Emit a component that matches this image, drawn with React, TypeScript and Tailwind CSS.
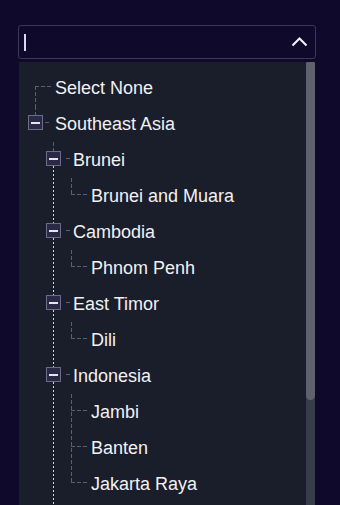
import React from "react";

type Line = "grey" | "white" | null;

interface RowData {
  label: string;
  guides: Line[];
  type: "leaf" | "box" | "spacer";
  up?: Line;
  down?: Line;
  leafUp?: boolean;
  leafDown?: boolean;
}

const rows: RowData[] = [
  { label: "Select None", guides: [], type: "leaf", leafUp: false, leafDown: true },
  { label: "Southeast Asia", guides: [], type: "box", up: "grey", down: null },
  { label: "Brunei", guides: [null], type: "box", up: "grey", down: "white" },
  { label: "Brunei and Muara", guides: [null, "white"], type: "leaf", leafUp: true, leafDown: false },
  { label: "Cambodia", guides: [null], type: "box", up: "white", down: "white" },
  { label: "Phnom Penh", guides: [null, "white"], type: "leaf", leafUp: true, leafDown: false },
  { label: "East Timor", guides: [null], type: "box", up: "white", down: "white" },
  { label: "Dili", guides: [null, "white"], type: "leaf", leafUp: true, leafDown: false },
  { label: "Indonesia", guides: [null], type: "box", up: "white", down: "white" },
  { label: "Jambi", guides: [null, "white"], type: "leaf", leafUp: true, leafDown: true },
  { label: "Banten", guides: [null, "white"], type: "leaf", leafUp: true, leafDown: true },
  { label: "Jakarta Raya", guides: [null, "white"], type: "leaf", leafUp: true, leafDown: false },
  // next country starts just below the fold; only its guide line shows
  { label: "", guides: [null, "white"], type: "spacer" },
];

const greyV = "bg-[image:repeating-linear-gradient(to_bottom,#5b5f70_0_4px,transparent_4px_6px)]";
const greyH = "bg-[image:repeating-linear-gradient(to_right,#5b5f70_0_4px,transparent_4px_6px)]";
const whiteV = "bg-[image:repeating-linear-gradient(to_bottom,#d6d6de_0_2px,transparent_2px_4px)]";

function vClass(line: Line) {
  return line === "white" ? whiteV : greyV;
}

function Guide({ line }: { line: Line }) {
  return (
    <div className="relative w-[18px] h-9 flex-none">
      {line && <div className={`absolute left-[9px] top-0 w-px h-9 ${vClass(line)}`} />}
    </div>
  );
}

function TreeRow({ row }: { row: RowData }) {
  const level = row.guides.length;
  if (row.type === "spacer") {
    return (
      <div className="flex h-9">
        {row.guides.slice(0, -1).map((g, i) => (
          <Guide key={i} line={g} />
        ))}
        <Guide line="white" />
      </div>
    );
  }
  return (
    <div className="flex h-9 items-stretch">
      {row.guides.map((g, i) => (
        <Guide key={i} line={g} />
      ))}
      <div className="relative w-[29px] h-9 flex-none">
        {row.type === "leaf" ? (
          <>
            <div
              className={`absolute left-[9px] w-px ${greyV} ${
                row.leafUp ? "top-0" : "top-[16px]"
              } ${row.leafDown ? "bottom-0" : row.leafUp ? "h-[17px]" : "h-0"}`}
            />
            <div className={`absolute left-[9px] top-[16px] w-[18px] h-px ${greyH}`} />
          </>
        ) : (
          <>
            {row.up && <div className={`absolute left-[9px] top-0 w-px h-[9px] ${vClass(row.up)}`} />}
            {row.down && (
              <div className={`absolute left-[9px] top-[24px] w-px h-[12px] ${vClass(row.down)}`} />
            )}
            <div className="absolute left-[2px] top-[9px] w-[15px] h-[15px] border border-[#6d6b8a] bg-[#2b2946] flex items-center justify-center">
              <div className="w-[9px] h-[2px] bg-[#e4e4ec]" />
            </div>
            <div
              className={`absolute top-[16px] h-px w-[4px] bg-[#5b5f70] ${
                level === 0 ? "left-[19px]" : "left-[22px]"
              }`}
            />
          </>
        )}
      </div>
      <span className="leading-9 text-[18px] text-[#f1f1f3] whitespace-nowrap">{row.label}</span>
    </div>
  );
}

export default function App() {
  return (
    <div
      className="h-[505px] overflow-hidden bg-[#0f0a2b] pt-[25px] pl-[18px] pr-[24px] flex flex-col"
      style={{ fontFamily: '"Liberation Sans", Arial, sans-serif' }}
    >
      <div className="h-[34px] flex-none rounded-[3px] border border-[#3d3759] flex items-center justify-between pl-[5px] pr-[7px]">
        <div className="w-[2px] h-[17px] bg-[#dcd6f2]" />
        <svg width="17" height="10" viewBox="0 0 17 10" className="mb-[1px]">
          <path d="M1.5 8.5 L8.5 1.5 L15.5 8.5" fill="none" stroke="#f4f4f8" strokeWidth="2" />
        </svg>
      </div>
      <div className="mt-[3px] mx-px flex-1 min-h-0 bg-[#1a1e2b] flex overflow-hidden">
        <div className="flex-1 pt-2 pl-[7px] flex flex-col">
          {rows.map((r, i) => (
            <TreeRow key={i} row={r} />
          ))}
        </div>
        <div className="w-[9px] flex-none bg-[#393c49] flex flex-col">
          <div className="h-[338px] bg-[#5f616c] rounded-t-[2px] rounded-b-[5px]" />
        </div>
      </div>
    </div>
  );
}
